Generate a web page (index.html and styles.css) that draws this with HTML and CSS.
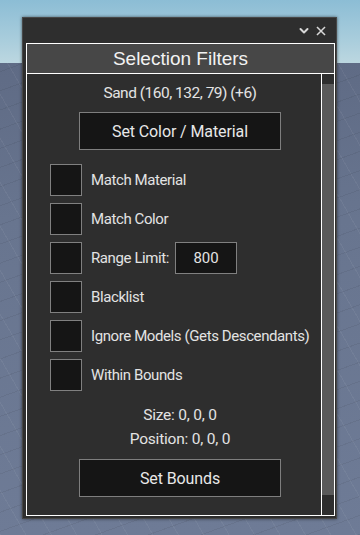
FILE: index.html
```html
<!DOCTYPE html>
<html>
<head>
<meta charset="utf-8">
<link rel="stylesheet" href="styles.css">
</head>
<body>
<div class="scene">
  <div class="window">
    <div class="topbar">
      <svg class="icon" width="10" height="10" viewBox="0 0 10 10"><polyline points="1.5,3 5,6.5 8.5,3" fill="none" stroke="#d8d8d8" stroke-width="2" stroke-linecap="round" stroke-linejoin="round"/></svg>
      <svg class="icon" width="10" height="10" viewBox="0 0 10 10"><path d="M1.5 1.5 L8.5 8.5 M8.5 1.5 L1.5 8.5" fill="none" stroke="#d8d8d8" stroke-width="1.5" stroke-linecap="square"/></svg>
    </div>
    <div class="panel">
      <div class="title">Selection Filters</div>
      <div class="content">
        <div class="body">
          <div class="info">Sand (160, 132, 79) (+6)</div>
          <div class="btn btn-top">Set Color / Material</div>
          <div class="rows">
            <div class="row"><div class="check"></div><span class="label">Match Material</span></div>
            <div class="row"><div class="check"></div><span class="label">Match Color</span></div>
            <div class="row"><div class="check"></div><span class="label">Range Limit:</span><div class="input">800</div></div>
            <div class="row"><div class="check"></div><span class="label">Blacklist</span></div>
            <div class="row"><div class="check"></div><span class="label">Ignore Models (Gets Descendants)</span></div>
            <div class="row"><div class="check"></div><span class="label">Within Bounds</span></div>
          </div>
          <div class="stats">
            <div class="stat">Size: 0, 0, 0</div>
            <div class="stat">Position: 0, 0, 0</div>
          </div>
          <div class="btn btn-bottom">Set Bounds</div>
        </div>
        <div class="scrollbar"><div class="thumb"></div></div>
      </div>
    </div>
  </div>
</div>
</body>
</html>
```

FILE: styles.css
```css
html, body {
  margin: 0;
  padding: 0;
}
body {
  width: 360px;
  height: 535px;
  overflow: hidden;
  background-color: #6a7791;
  background-image:
    linear-gradient(to bottom, #8cbdd5 0px, #a9cddc 40px, #bcd7e0 63px, transparent 63px),
    repeating-linear-gradient(60deg, rgba(255,255,255,0.05) 0 1px, transparent 1px 22px),
    repeating-linear-gradient(-20deg, rgba(0,0,0,0.06) 0 1px, transparent 1px 18px),
    linear-gradient(to bottom, #5f6b85 63px, #68758f 220px, #6e7b96 535px);
  font-family: "Roboto", "Liberation Sans", sans-serif;
}
.scene {
  padding: 17px 0 0 22px;
}
.window {
  width: 313px;
  height: 500px;
  border: 1px solid #474747;
  background: #2e2e2e;
  box-shadow: 0 0 3px rgba(0, 0, 0, 0.55);
  display: flex;
  flex-direction: column;
}
.topbar {
  height: 25px;
  display: flex;
  justify-content: flex-end;
  align-items: center;
  gap: 7px;
  padding-right: 10px;
}
.icon {
  display: block;
}
.panel {
  margin-left: 3px;
  width: 309px;
  box-sizing: border-box;
  border: 1px solid #ffffff;
  height: 473px;
  display: flex;
  flex-direction: column;
}
.title {
  height: 29px;
  border-bottom: 1px solid #ffffff;
  background: #474747;
  color: #f2f2f2;
  font-family: "Liberation Sans", Arial, sans-serif;
  font-size: 19px;
  line-height: 29px;
  text-align: center;
}
.content {
  flex: 1;
  display: flex;
}
.body {
  width: 294px;
  box-sizing: border-box;
  padding: 9px 0 0 12px;
  display: flex;
  flex-direction: column;
  color: #e3e3e3;
  font-size: 15.5px;
  letter-spacing: -0.5px;
  white-space: nowrap;
}
.info {
  line-height: 20px;
  height: 20px;
  text-align: center;
}
.btn {
  align-self: center;
  width: 202px;
  height: 38px;
  box-sizing: border-box;
  border: 1px solid #7e7e7e;
  background: #151515;
  color: #e8e8e8;
  display: flex;
  align-items: center;
  justify-content: center;
  font-size: 16px;
  letter-spacing: -0.1px;
}
.btn-top {
  margin-top: 9px;
}
.rows {
  margin-top: 14px;
  margin-left: 11px;
  display: flex;
  flex-direction: column;
  gap: 7px;
}
.row {
  display: flex;
  align-items: center;
  height: 32px;
}
.check {
  width: 32px;
  height: 32px;
  box-sizing: border-box;
  border: 1px solid #808080;
  background: #151515;
}
.label {
  margin-left: 9px;
  font-size: 15px;
  letter-spacing: -0.4px;
}
.input {
  margin-left: 6px;
  width: 62px;
  height: 32px;
  box-sizing: border-box;
  border: 1px solid #808080;
  background: #151515;
  display: flex;
  align-items: center;
  justify-content: center;
  font-size: 15px;
  letter-spacing: 0;
}
.stats {
  margin-top: 12px;
  text-align: center;
}
.stat {
  line-height: 24px;
  height: 24px;
  letter-spacing: -0.2px;
}
.btn-bottom {
  margin-top: 8px;
}
.scrollbar {
  width: 12px;
  border-left: 1px solid #ffffff;
  background: #2e2e2e;
}
.thumb {
  margin-top: 10px;
  height: 411px;
  background: #5a5a5a;
}
```
